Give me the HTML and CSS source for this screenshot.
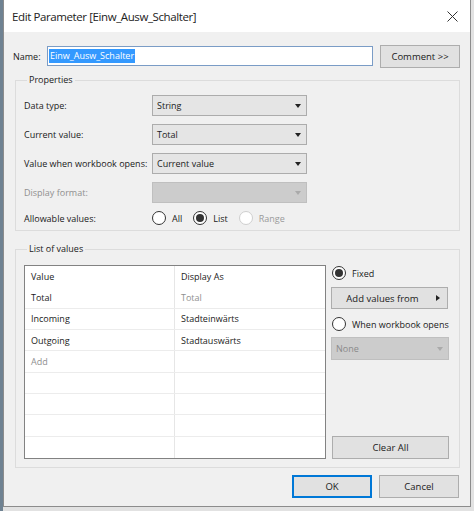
FILE: index.html
```html
<!DOCTYPE html>
<html>
<head>
    <title>Edit Parameter</title>
    <link rel="stylesheet" href="styles.css">
</head>
<body>
    <div class="window">
        <div class="titlebar">
            <span class="title">Edit Parameter [Einw_Ausw_Schalter]</span>
            <svg class="close" width="11" height="11" viewBox="0 0 11 11">
                <path d="M0.5 0.5L10.5 10.5M10.5 0.5L0.5 10.5" />
            </svg>
        </div>

        <div class="dialog">
            <div class="name-row">
                <span class="name-label">Name:</span>
                <div class="name-input"><span class="selected">Einw_Ausw_Schalter</span></div>
                <button class="btn">Comment &gt;&gt;</button>
            </div>

            <fieldset class="group properties">
                <legend>Properties</legend>
                <div class="prop-grid">
                    <span>Data type:</span>
                    <div class="combo"><span>String</span><i class="arrow"></i></div>

                    <span>Current value:</span>
                    <div class="combo"><span>Total</span><i class="arrow"></i></div>

                    <span>Value when workbook opens:</span>
                    <div class="combo"><span>Current value</span><i class="arrow"></i></div>

                    <span class="muted">Display format:</span>
                    <div class="combo disabled"><span></span><i class="arrow"></i></div>

                    <span>Allowable values:</span>
                    <div class="radios">
                        <label class="radio"><i class="dot"></i>All</label>
                        <label class="radio"><i class="dot checked"></i>List</label>
                        <label class="radio disabled"><i class="dot"></i>Range</label>
                    </div>
                </div>
            </fieldset>

            <fieldset class="group values">
                <legend>List of values</legend>
                <div class="values-body">
                    <div class="value-table">
                        <div class="row head"><span>Value</span><span>Display As</span></div>
                        <div class="row"><span>Total</span><span class="muted">Total</span></div>
                        <div class="row"><span>Incoming</span><span>Stadteinwärts</span></div>
                        <div class="row"><span>Outgoing</span><span>Stadtauswärts</span></div>
                        <div class="row"><span class="muted">Add</span><span></span></div>
                        <div class="row"><span></span><span></span></div>
                        <div class="row"><span></span><span></span></div>
                        <div class="row"><span></span><span></span></div>
                        <div class="row last"><span></span><span></span></div>
                    </div>

                    <div class="side">
                        <label class="radio"><i class="dot checked"></i>Fixed</label>
                        <button class="btn add-from">Add values from<i class="arrow-right"></i></button>
                        <label class="radio when"><i class="dot"></i>When workbook opens</label>
                        <div class="combo disabled"><span>None</span><i class="arrow"></i></div>
                        <button class="btn clear">Clear All</button>
                    </div>
                </div>
            </fieldset>

            <div class="footer">
                <button class="btn ok">OK</button>
                <button class="btn">Cancel</button>
            </div>
        </div>
    </div>
</body>
</html>
```

FILE: styles.css
```css
body {
    margin: 0;
    height: 511px;
    overflow: hidden;
    background: linear-gradient(90deg, #6f8292 3px, #e2e2e2 3px);
    font-family: 'Open Sans', 'Noto Sans', sans-serif;
    font-size: 9px;
    color: #1a1a1a;
    white-space: nowrap;
}

.window {
    box-sizing: border-box;
    width: 468px;
    height: 507px;
    margin-left: 3px;
    background: #f0f0f0;
    border: 1px solid #8c8c8c;
    border-top: none;
}

.titlebar {
    display: flex;
    align-items: center;
    justify-content: space-between;
    height: 32px;
    padding: 0 12px 0 8px;
    background: #ffffff;
}

.title {
    font-size: 11.5px;
    letter-spacing: -0.4px;
    color: #222;
}

.close {
    stroke: #333;
    stroke-width: 1;
    fill: none;
}

.dialog {
    padding: 13px 10px 0 11px;
}

.name-row {
    display: flex;
    align-items: center;
    margin-left: -2px;
    height: 22px;
}

.name-label {
    width: 34px;
}

.name-input {
    box-sizing: border-box;
    width: 326px;
    height: 20px;
    margin-right: 7px;
    padding: 2px 1px;
    background: #fff;
    border: 1px solid #7a9cc6;
    display: flex;
    align-items: center;
}

.selected {
    background: #3399ff;
    color: #fff;
    padding: 0 1px;
    line-height: 14px;
}

.btn {
    box-sizing: border-box;
    width: 80px;
    height: 23px;
    padding: 0;
    background: #e1e1e1;
    border: 1px solid #adadad;
    font-family: inherit;
    font-size: 9.5px;
    color: #1a1a1a;
}

.group {
    margin: 5px 0 0;
    border: 1px solid #dcdcdc;
    padding: 7px 8px 5px;
}

.group legend {
    padding: 0 2px;
    margin-left: 3px;
    line-height: 16px;
}

.prop-grid {
    display: grid;
    grid-template-columns: 128px 155px;
    grid-template-rows: 21px 21px 21px 21px 14px;
    row-gap: 8px;
    align-items: center;
}

.combo {
    box-sizing: border-box;
    height: 21px;
    display: flex;
    align-items: center;
    justify-content: space-between;
    padding: 0 5px 0 4px;
    background: #e5e5e5;
    border: 1px solid #acacac;
}

.combo.disabled {
    background: #cccccc;
    border-color: #bfbfbf;
    color: #8a8a8a;
}

.arrow {
    width: 0;
    height: 0;
    border-left: 3.5px solid transparent;
    border-right: 3.5px solid transparent;
    border-top: 4px solid #222;
}

.combo.disabled .arrow {
    border-top-color: #aaa;
}

.muted {
    color: #8f8f8f;
}

.radios {
    display: flex;
    align-items: center;
}

.radio {
    display: flex;
    align-items: center;
    gap: 6px;
    margin-right: 11px;
}

.radio.disabled {
    color: #9a9a9a;
}

.dot {
    box-sizing: border-box;
    flex-shrink: 0;
    width: 14px;
    height: 14px;
    border-radius: 50%;
    border: 1px solid #333;
    background: #fff;
    position: relative;
}

.radio.disabled .dot {
    border-color: #cfcfcf;
}

.dot.checked::after {
    content: '';
    position: absolute;
    left: 2px;
    top: 2px;
    width: 8px;
    height: 8px;
    border-radius: 50%;
    background: #333;
}

.values {
    margin-top: 10px;
    padding: 8px 10px 8px 8px;
}

.values-body {
    display: flex;
    gap: 5px;
}

.value-table {
    box-sizing: border-box;
    width: 302px;
    height: 194px;
    background: #fff;
    border: 1px solid #828282;
    display: grid;
    grid-template-rows: repeat(9, 1fr);
}

.row {
    display: grid;
    grid-template-columns: 150px 1fr;
    border-bottom: 1px solid #ececec;
}

.row.head,
.row.last {
    border-bottom: none;
}

.row span {
    display: flex;
    align-items: center;
    padding-left: 6px;
}

.row span:first-child {
    border-right: 1px solid #e6e6e6;
}

.side {
    width: 118px;
    display: flex;
    flex-direction: column;
}

.side .radio {
    height: 16px;
    margin: 0 0 0 1px;
}

.side .add-from {
    width: 117px;
    height: 22px;
    margin-top: 6px;
    padding-right: 14px;
    position: relative;
}

.arrow-right {
    position: absolute;
    right: 7px;
    top: 7px;
    width: 0;
    height: 0;
    border-top: 3.5px solid transparent;
    border-bottom: 3.5px solid transparent;
    border-left: 4px solid #222;
}

.side .when {
    margin-top: 7px;
}

.side .combo {
    height: 23px;
    margin-top: 5px;
}

.side .clear {
    width: 117px;
    margin-top: auto;
    margin-left: 1px;
}

.footer {
    display: flex;
    justify-content: flex-end;
    gap: 7px;
    margin-top: 7px;
    padding-right: 1px;
}

.btn.ok {
    border: 2px solid #0078d7;
}
```
